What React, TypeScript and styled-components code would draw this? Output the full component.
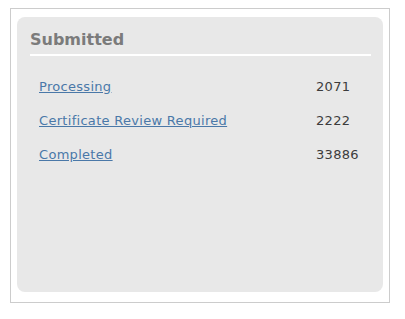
import styled, { createGlobalStyle } from "styled-components";

const rows = [
  { label: "Processing", count: 2071 },
  { label: "Certificate Review Required", count: 2222 },
  { label: "Completed", count: 33886 },
];

const GlobalStyle = createGlobalStyle`
  body {
    margin: 0;
    background: #fff;
    font-family: Verdana, "DejaVu Sans", sans-serif;
  }
`;

const App = () => {
  return (
    <>
      <GlobalStyle />
      <Frame>
        <Panel>
          <Heading>Submitted</Heading>
          <List>
            {rows.map((r) => (
              <Row key={r.label}>
                <Link href="#">{r.label}</Link>
                <Count>{r.count}</Count>
              </Row>
            ))}
          </List>
        </Panel>
      </Frame>
    </>
  );
};

const Frame = styled.div`
  box-sizing: border-box;
  margin: 8px 0 0 10px;
  width: 380px;
  height: 295px;
  border: 1px solid #cccccc;
  padding: 8px 6px 10px 6px;
`;

const Panel = styled.div`
  box-sizing: border-box;
  height: 100%;
  background: #e8e8e8;
  border-radius: 8px;
  padding: 13px 12px 0 13px;
`;

const Heading = styled.h2`
  margin: 0;
  font-size: 16px;
  line-height: 20px;
  font-weight: bold;
  color: #7b7b7b;
  padding-bottom: 4px;
  border-bottom: 2px solid #ffffff;
`;

const List = styled.div`
  display: flex;
  flex-direction: column;
  padding: 13px 0 0 9px;
`;

const Row = styled.div`
  display: grid;
  grid-template-columns: 277px auto;
  height: 34px;
  align-items: center;
  font-size: 13px;
  letter-spacing: 0.3px;
`;

const Link = styled.a`
  color: #4a78a8;
  text-decoration: underline;
  justify-self: start;
`;

const Count = styled.span`
  color: #3c3c3c;
`;

export default App;
